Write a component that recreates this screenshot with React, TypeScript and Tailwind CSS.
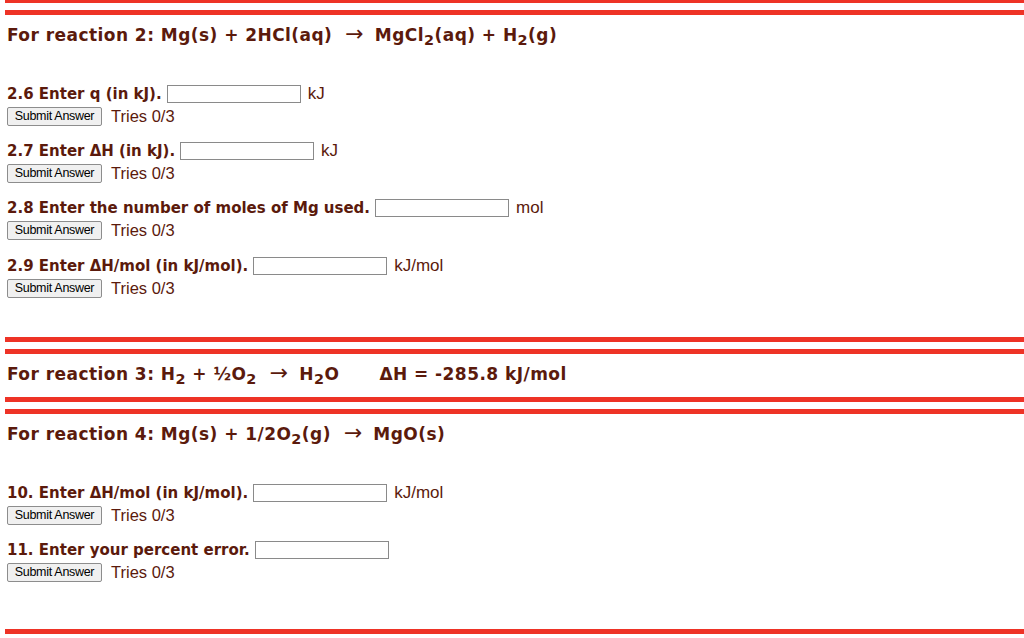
import React from 'react';

const ink = 'text-[#5b1a0c]';

function Rule() {
  return (
    <div className="ml-[5px]">
      <div className="h-[5px] bg-[#ee3326]" />
      <div className="h-[5px] bg-[#ee3326] mt-[7px]" />
    </div>
  );
}

function Sub({ children }: { children: React.ReactNode }) {
  return <sub className="text-[0.85em] relative bottom-[-0.3em] leading-none">{children}</sub>;
}

function Arrow() {
  return (
    <span className="font-normal ml-[13px] mr-[11px] text-[22px] leading-[0] tracking-normal">
      →
    </span>
  );
}

function Heading({ children, className = '' }: { children: React.ReactNode; className?: string }) {
  return (
    <h2
      className={`ml-[7px] h-5 leading-5 text-[17px] font-bold tracking-[0.45px] whitespace-nowrap ${ink} ${className}`}
      style={{ fontFamily: '"DejaVu Sans", Verdana, sans-serif' }}
    >
      {children}
    </h2>
  );
}

function Question({
  label,
  unit,
  className = '',
}: {
  label: React.ReactNode;
  unit?: string;
  className?: string;
}) {
  return (
    <div className={`ml-[7px] ${className}`}>
      <div className="h-5 flex items-center">
        <span
          className={`text-[15px] font-bold whitespace-nowrap ${ink}`}
          style={{ fontFamily: '"DejaVu Sans", Verdana, sans-serif' }}
        >
          {label}
        </span>
        <input
          type="text"
          className="ml-[5px] w-[134px] h-[18px] border border-[#8a8a8a] bg-white outline-none px-1 text-[13px]"
        />
        {unit && (
          <span className={`ml-[7px] text-[17px] ${ink} font-['Liberation_Sans',Arial,sans-serif]`}>
            {unit}
          </span>
        )}
      </div>
      <div className="mt-[2px] flex items-center h-[20px]">
        <button
          type="button"
          className="h-[19px] w-[95px] text-[12.5px] leading-none text-black bg-[#f0f0f0] border border-[#8d8d8d] rounded-[2px] font-['Liberation_Sans',Arial,sans-serif] tracking-[-0.3px]"
        >
          Submit Answer
        </button>
        <span className={`ml-[9px] text-[16.5px] ${ink} font-['Liberation_Sans',Arial,sans-serif]`}>
          Tries 0/3
        </span>
      </div>
    </div>
  );
}

export default function App() {
  return (
    <div className="w-[1024px] h-[638px] overflow-hidden bg-white">
      <div className="-mt-[2px]">
        <Rule />
        <Heading className="mt-[10px]">
          For reaction 2: Mg(s) + 2HCl(aq)<Arrow />MgCl<Sub>2</Sub>(aq) + H<Sub>2</Sub>(g)
        </Heading>

        <Question className="mt-[39px]" label="2.6 Enter q (in kJ)." unit="kJ" />
        <Question className="mt-[15px]" label="2.7 Enter ΔH (in kJ)." unit="kJ" />
        <Question className="mt-[15px]" label="2.8 Enter the number of moles of Mg used." unit="mol" />
        <Question className="mt-[16px]" label="2.9 Enter ΔH/mol (in kJ/mol)." unit="kJ/mol" />

        <div className="mt-[39px]">
          <Rule />
        </div>
        <Heading className="mt-[10px]">
          For reaction 3: H<Sub>2</Sub> + ½O<Sub>2</Sub>
          <Arrow />H<Sub>2</Sub>O
          <span className="ml-[40px]">ΔH = -285.8 kJ/mol</span>
        </Heading>

        <div className="mt-[13px]">
          <Rule />
        </div>
        <Heading className="mt-[10px]">
          For reaction 4: Mg(s) + 1/2O<Sub>2</Sub>(g)<Arrow />MgO(s)
        </Heading>

        <Question className="mt-[39px]" label="10. Enter ΔH/mol (in kJ/mol)." unit="kJ/mol" />
        <Question className="mt-[15px]" label="11. Enter your percent error." />

        <div className="mt-[47px]">
          <Rule />
        </div>
      </div>
    </div>
  );
}
